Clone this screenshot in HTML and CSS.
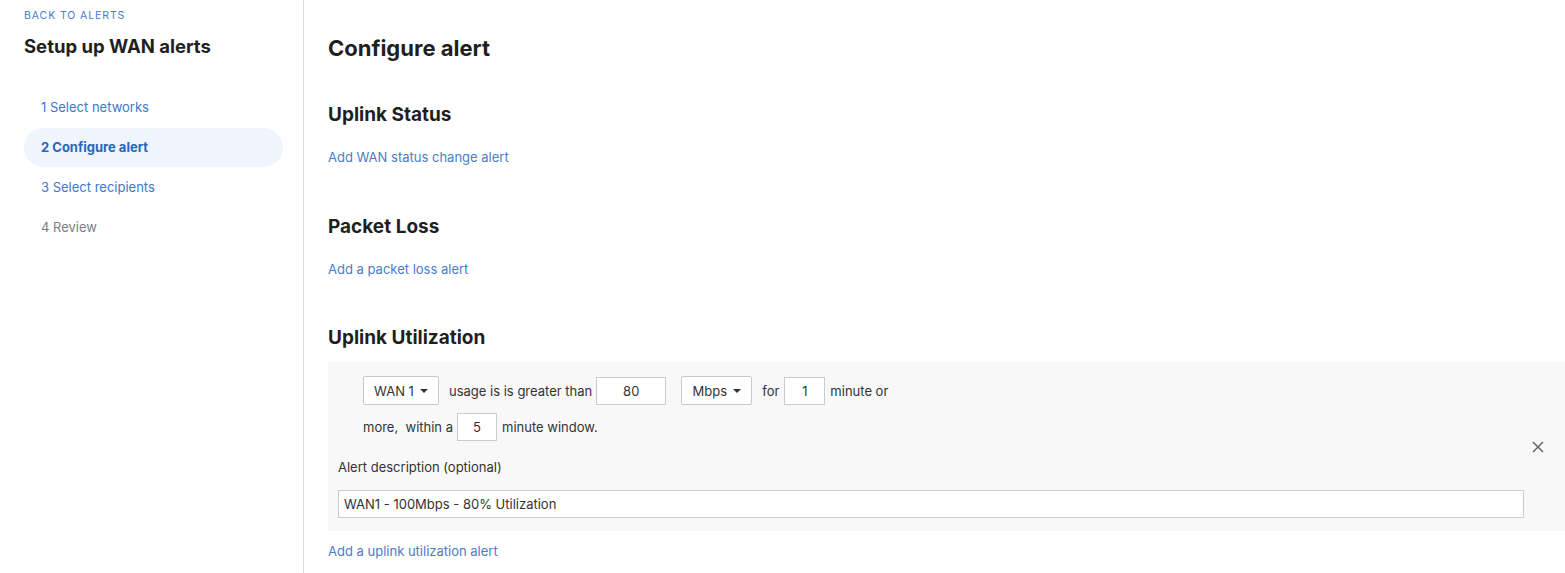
FILE: index.html
```html
<!DOCTYPE html>
<html>
<head>
<meta charset="utf-8">
<link rel="stylesheet" href="styles.css">
</head>
<body>
<div class="page">
  <aside class="sidebar">
    <a class="back">BACK TO ALERTS</a>
    <h1 class="side-title">Setup up WAN alerts</h1>
    <nav class="steps">
      <div class="step">1 Select networks</div>
      <div class="step active">2 Configure alert</div>
      <div class="step">3 Select recipients</div>
      <div class="step muted">4 Review</div>
    </nav>
  </aside>
  <main class="main">
    <h2 class="main-title">Configure alert</h2>
    <section class="section s1">
      <h3 class="sec-title">Uplink Status</h3>
      <a class="link">Add WAN status change alert</a>
    </section>
    <section class="section s2">
      <h3 class="sec-title">Packet Loss</h3>
      <a class="link">Add a packet loss alert</a>
    </section>
    <section class="section s3">
      <h3 class="sec-title">Uplink Utilization</h3>
      <div class="alert-box">
        <div class="rule">
          <div class="rule-line">
            <span class="dropdown w-wan">WAN 1 <span class="caret"></span></span>
            <span class="txt gap-l10">usage is is greater than</span>
            <span class="input w-80">80</span>
            <span class="dropdown w-mbps gap-l16">Mbps <span class="caret"></span></span>
            <span class="txt gap-l11">for</span>
            <span class="input w-1">1</span>
            <span class="txt">minute or</span>
          </div>
          <div class="rule-line second">
            <span class="txt first">more,&nbsp; within a</span>
            <span class="input w-5">5</span>
            <span class="txt">minute window.</span>
          </div>
        </div>
        <button class="close" aria-label="Remove">
          <svg width="12" height="12" viewBox="0 0 12 12"><path d="M1 1L11 11M11 1L1 11" stroke="#5c6670" stroke-width="1.5" fill="none"/></svg>
        </button>
        <div class="desc-label">Alert description (optional)</div>
        <div class="desc-input">WAN1 - 100Mbps - 80% Utilization</div>
      </div>
      <a class="link add-util">Add a uplink utilization alert</a>
    </section>
  </main>
</div>
</body>
</html>
```

FILE: styles.css
```css
* { box-sizing: border-box; }
html, body { margin: 0; padding: 0; }
body {
  font-family: Inter, "Noto Sans", sans-serif;
  color: #222;
  background: #fff;
  width: 1565px;
  height: 573px;
  overflow: hidden;
}
.page {
  display: flex;
  height: 573px;
}
.sidebar {
  width: 304px;
  flex: none;
  border-right: 1px solid #dcdcdc;
  padding: 9px 20px 0 24px;
}
.back {
  display: block;
  font-size: 10.5px;
  letter-spacing: 0.9px;
  color: #4a7cc9;
  line-height: 13px;
}
.side-title {
  margin: 12px 0 0;
  font-size: 18.5px;
  font-weight: 700;
  line-height: 24px;
  color: #1f1f1f;
}
.steps {
  margin-top: 29px;
  display: flex;
  flex-direction: column;
}
.step {
  height: 40px;
  line-height: 40px;
  padding-left: 17px;
  font-size: 13px;
  color: #3d78c9;
  border-radius: 20px;
}
.step.active {
  background: #eff5fc;
  font-weight: 700;
  color: #2a66b8;
  height: 39px;
  line-height: 39px;
  margin-top: 1px;
}
.step.muted { color: #7b8087; }

.main {
  flex: 1;
  padding: 34px 0 0 24px;
}
.main-title {
  margin: 0;
  font-size: 22px;
  font-weight: 700;
  line-height: 28px;
  color: #1f1f1f;
}
.s1 { margin-top: 41px; }
.s2 { margin-top: 50px; }
.s3 { margin-top: 49px; }
.sec-title {
  margin: 0;
  font-size: 19px;
  font-weight: 700;
  line-height: 24px;
  color: #1f1f1f;
}
.link {
  display: block;
  margin-top: 22px;
  font-size: 13px;
  line-height: 16px;
  color: #4a7cc9;
}
.alert-box {
  position: relative;
  margin-top: 12px;
  background: #f8f8f8;
  padding: 14px 41px 14px 10px;
  height: 169px;
}
.rule { padding-left: 25px; }
.rule-line {
  display: flex;
  align-items: center;
  height: 29px;
  font-size: 13px;
  color: #333;
}
.rule-line.second { margin-top: 8px; height: 28px; }
.dropdown {
  display: inline-flex;
  align-items: center;
  justify-content: center;
  height: 29px;
  border: 1px solid #c9c9c9;
  background: #fff;
  border-radius: 2px;
  font-size: 13px;
  color: #333;
}
.caret {
  display: inline-block;
  margin-left: 6px;
  width: 0; height: 0;
  border-left: 4px solid transparent;
  border-right: 4px solid transparent;
  border-top: 4px solid #333;
}
.w-wan { width: 76px; }
.w-mbps { width: 71px; }
.input {
  display: inline-flex;
  align-items: center;
  justify-content: center;
  height: 28px;
  border: 1px solid #ccc;
  background: #fff;
  font-size: 13px;
  color: #333;
}
.w-80 { width: 70px; margin-left: 4px; }
.w-1 { width: 41px; margin-left: 5px; margin-right: 5px; }
.w-5 { width: 40px; margin-left: 4px; margin-right: 5px; }
.gap-l10 { margin-left: 10px; }
.gap-l16 { margin-left: 15px; }
.gap-l11 { margin-left: 10px; }
.close {
  position: absolute;
  right: 20px;
  top: 78px;
  width: 14px;
  height: 14px;
  padding: 0;
  border: 0;
  background: none;
  display: flex;
  align-items: center;
  justify-content: center;
}
.desc-label {
  margin-top: 18px;
  font-size: 13px;
  line-height: 16px;
  color: #333;
}
.desc-input {
  margin-top: 15px;
  height: 28px;
  width: 1186px;
  border: 1px solid #ccc;
  background: #fff;
  font-size: 13px;
  line-height: 26px;
  padding-left: 5px;
  color: #333;
}
.link.add-util { margin-top: 12px; }
```
